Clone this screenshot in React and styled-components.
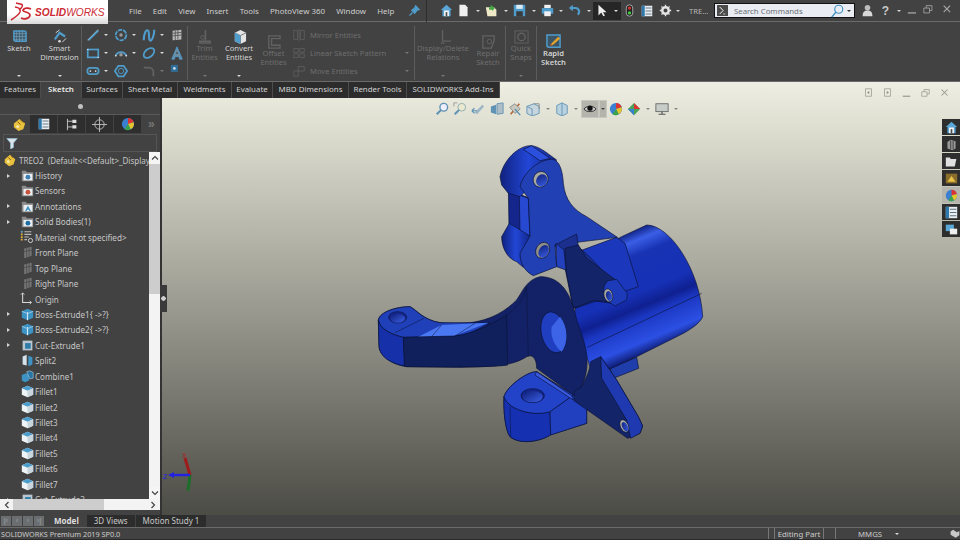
import React from "react";
import styled, { createGlobalStyle } from "styled-components";

const GlobalStyle = createGlobalStyle`
  html, body { margin: 0; padding: 0; background: #424242; overflow: hidden; }
  #root { width: 960px; height: 540px; }
  * { box-sizing: border-box; }
`;

const BLUE = "#4f9ccb";
const OFF = "#626262";

const Svg = ({ s = 16, children, ...rest }) => (
  <svg width={s} height={s} viewBox="0 0 16 16" fill="none" style={{ flex: "none", display: "block" }} {...rest}>
    {children}
  </svg>
);

/* sketch tool drawings */
const Line = () => <Svg><path d="M2 14L14 2" stroke="#e8f0f6" strokeWidth="1.2" /><path d="M3 14L14 3" stroke={BLUE} strokeWidth="2" /></Svg>;
const Rect = () => <Svg><rect x="2" y="4" width="12" height="9" stroke={BLUE} strokeWidth="2" /><path d="M1 4h2M13 13h2" stroke="#ddd" /></Svg>;
const Slot = () => <Svg><rect x="1.5" y="4.5" width="13" height="7" rx="3.5" stroke={BLUE} strokeWidth="2" /><circle cx="5" cy="8" r="1" fill="#ddd" /><circle cx="11" cy="8" r="1" fill="#ddd" /></Svg>;
const Ring = () => <Svg><circle cx="8" cy="8" r="6" stroke={BLUE} strokeWidth="2" strokeDasharray="5 1" /><circle cx="8" cy="8" r="2" fill="#999" /></Svg>;
const ArcTool = () => <Svg><path d="M2 11a6.5 6.5 0 0 1 12 0" stroke={BLUE} strokeWidth="2" /><circle cx="8" cy="10" r="2" fill="#999" /><circle cx="2" cy="11" r="1" fill="#ddd" /><circle cx="14" cy="11" r="1" fill="#ddd" /></Svg>;
const Hex = () => <Svg><path d="M5 2h6l4 6-4 6H5L1 8z" stroke={BLUE} strokeWidth="2" /><circle cx="8" cy="8" r="3" stroke={BLUE} /></Svg>;
const Spline = () => <Svg><path d="M2 14C2 6 5 1 7 3s0 9 2 11 5-5 5-12" stroke={BLUE} strokeWidth="2.4" /></Svg>;
const Ellipse = () => <Svg><ellipse cx="8" cy="8" rx="7" ry="4.5" transform="rotate(-40 8 8)" stroke={BLUE} strokeWidth="2" /></Svg>;
const Fillet = () => <Svg><path d="M2 4h6a5 5 0 0 1 5 5v5" stroke={OFF} strokeWidth="2" /></Svg>;
const PlaneGrid = () => <Svg><path d="M3 3l10-1v11l-10 1z" fill="#bbb" /><path d="M6 3v11M9 2v11M3 6l10-1M3 9l10-1" stroke="#555" /></Svg>;
const TextA = () => <Svg><path d="M8 1L2 15h3l1-3h4l1 3h3z" fill="#6d8ea3" stroke={BLUE} /><path d="M7 9l1-3 1 3z" fill="#444" /></Svg>;
const Dot = () => <Svg s={10}><rect x="1" y="1" width="8" height="8" fill="#2f6e98" /><circle cx="5" cy="5" r="1.5" fill="#cde" /></Svg>;

const SketchIcon = () => <Svg s={15}><path d="M2 2h11a2 2 0 0 1 2 2v9H4a2 2 0 0 1-2-2z" stroke={BLUE} strokeWidth="1.6" fill="#3f5a6c" /><path d="M5 2v11M8 2v11M11 2v11M2 5h13M2 8h13M2 11h13" stroke="#7da9c4" strokeWidth=".6" /></Svg>;
const SmartIcon = () => <Svg s={15}><path d="M3 11L8 4l6 4" stroke={BLUE} strokeWidth="2.4" /><path d="M4 4l4-3M11 14l4-4" stroke="#ddd" /><circle cx="8" cy="13" r="1.4" fill="#ddd" /></Svg>;
const TrimIcon = () => <Svg s={15}><path d="M9 1v11M3 13h11v2H3z" stroke={OFF} strokeWidth="1.6" /><circle cx="6" cy="9" r="2" stroke={OFF} /></Svg>;
const ConvertIcon = () => <Svg s={15}><path d="M9 1l6 3v9l-6 3-6-3V4z" fill="#e4e4e4" /><path d="M3 4l6 3 6-3M9 7v9" stroke="#777" /><path d="M3 4v9l6 3V7z" fill="#4f9ccb" /></Svg>;
const OffsetIcon = () => <Svg s={15}><path d="M3 2h12v3H6v7h9v3H3z" stroke={OFF} strokeWidth="1.4" /></Svg>;
const MirrorIcon = () => <Svg s={12}><path d="M1 2h5v12H1zM10 2h5v12h-5zM8 0v16" stroke={OFF} /></Svg>;
const PatternIcon = () => <Svg s={12}><path d="M1 2h6v5H1zM9 2h6v5H9zM1 9h6v5H1zM9 9h6v5H9z" stroke={OFF} /></Svg>;
const MoveIcon = () => <Svg s={12}><path d="M7 2h8v6H7zM1 8h6v7H1z" stroke={OFF} /></Svg>;
const RelationIcon = () => <Svg s={15}><path d="M7 1v12h9M5 15h4" stroke={OFF} strokeWidth="1.4" /></Svg>;
const RepairIcon = () => <Svg s={15}><path d="M2 2h12v5l-3 8H2z" stroke={OFF} strokeWidth="1.4" /><circle cx="9" cy="8" r="2.4" stroke={OFF} /></Svg>;
const SnapsIcon = () => <Svg s={15}><rect x="1" y="2" width="14" height="13" stroke={OFF} /><circle cx="8" cy="8.5" r="4" stroke={OFF} strokeWidth="1.4" /></Svg>;
const RapidIcon = () => <Svg s={15}><path d="M1 1h14v13H3a2 2 0 0 1-2-2z" stroke={BLUE} strokeWidth="1.6" fill="#3e5566" /><path d="M5 11L13 3l2 2-8 7z" fill="#e3a32a" /><path d="M5 11l-1 2 3-1z" fill="#d9562b" /></Svg>;

/* title bar */
const House = ({ s = 16 }) => <Svg s={s}><path d="M8 1L1 7.5h2V15h10V7.5h2z" fill="#5aa6d6" /><path d="M5 8h6v7H5z" fill="#f2f2f2" /><path d="M7 10h2v5H7z" fill="#4a4a4a" /></Svg>;
const Doc = () => <Svg><path d="M3 1h7l3 3v11H3z" fill="#f0f0f0" /></Svg>;
const OpenDoc = () => <Svg><path d="M1 4h10l3 3v8H3z" fill="#efe9c8" /><path d="M7 1l5 4-3 4V7H5V4h2z" fill="#44a644" /></Svg>;
const Floppy = () => <Svg><path d="M1 1h14v14H1z" fill="#4f9ccb" /><path d="M4 1h8v5H4z" fill="#dceaf3" /><path d="M4 9h8v6H4z" fill="#3a3a3a" /></Svg>;
const Printer = () => <Svg><path d="M4 1h8v4H4z" fill="#f0f0f0" /><path d="M1 5h14v7H1z" fill="#4f9ccb" /><path d="M4 9h8v6H4z" fill="#f0f0f0" /></Svg>;
const Undo = () => <Svg><path d="M3 5h6a4.5 4.5 0 0 1 3 8" stroke="#4f9ccb" strokeWidth="2.6" /><path d="M6 1v8L1 5z" fill="#4f9ccb" /></Svg>;
const Cursor = () => <Svg><path d="M3 1v13l3.5-3.5L9 15l2-1-2.4-4H13z" fill="#eee" /></Svg>;
const Lights = () => <Svg><rect x="4" y="1" width="8" height="14" rx="4" fill="#222" stroke="#bbb" /><circle cx="8" cy="5" r="2" fill="#d33" /><circle cx="8" cy="11" r="2" fill="#4c4" /></Svg>;
const ListPane = ({ s = 16 }) => <Svg s={s}><path d="M1 1h14v14H1z" fill="#e8eef2" /><path d="M1 1h4v14H1z" fill="#2d78ad" /><path d="M6 4h8M6 8h8M6 12h8" stroke="#456" /></Svg>;
const Gear = () => <Svg><circle cx="8" cy="8" r="4" stroke="#e6e6e6" strokeWidth="3" /><path d="M8 1v14M1 8h14M3 3l10 10M13 3L3 13" stroke="#e6e6e6" strokeWidth="1.6" strokeDasharray="2 10" /></Svg>;
const Pin = () => <Svg><path d="M10 1l5 5-3 1-3 4-4-4 4-3zM6 10l-4 4" stroke="#4f9ccb" strokeWidth="1.6" fill="#4f9ccb" /></Svg>;
const Prompt = () => <Svg s={11}><rect width="16" height="16" fill="#4b4b4b" /><path d="M4 3l5 5-5 5" stroke="#fff" strokeWidth="1.4" /><path d="M9 13h3" stroke="#fff" /></Svg>;
const Lens = () => <Svg s={14}><circle cx="10" cy="6" r="4.6" stroke="#3d8fc4" strokeWidth="1.3" /><path d="M7 9l-5 6" stroke="#3d8fc4" strokeWidth="1.6" /></Svg>;
const User = () => <Svg><circle cx="8" cy="4.5" r="3.4" fill="#bdbdbd" /><path d="M2 15c0-5 2-7 6-7s6 2 6 7z" fill="#d8d8d8" /></Svg>;
const WinMin = ({ c }) => <Svg s={12}><path d="M1 11h10" stroke={c} strokeWidth="1.6" /></Svg>;
const WinMax = ({ c }) => <Svg s={12}><path d="M1 5h7v6H1zM4 5V2h7v6H8" stroke={c} /></Svg>;
const WinClose = ({ c }) => <Svg s={12}><path d="M2 2l8 8M10 2l-8 8" stroke={c} strokeWidth="1.4" /></Svg>;
const PaneArrow = ({ flip }) => <Svg s={12}><path d="M2 1h8v10H2z" stroke="#9a9a90" /><path d={flip ? "M5 4l3 2-3 2z" : "M7 4L4 6l3 2z"} fill="#8a8a80" /></Svg>;

/* heads-up view toolbar */
const H_BLUE = "#5f92b4";
const HudZoom = () => <Svg><circle cx="10" cy="6" r="4.4" stroke={H_BLUE} strokeWidth="1.6" fill="#eef" /><path d="M7 9l-5 5" stroke={H_BLUE} strokeWidth="2.4" /></Svg>;
const HudArea = () => <Svg><circle cx="10" cy="6" r="4.4" fill="#e9e9d2" stroke="#8aa" /><path d="M7 9l-5 5" stroke={H_BLUE} strokeWidth="2.4" /><path d="M1 1h4M1 1v4" stroke="#999" /></Svg>;
const HudPrev = () => <Svg><path d="M4 12L13 3l2 2-8 9z" fill="#9eb7c7" /><path d="M1 10h6M1 10l3-3M1 10l3 3" stroke={H_BLUE} strokeWidth="1.4" /></Svg>;
const HudSection = () => <Svg><path d="M1 5l6-2v11l-6-2z" fill="#5f92b4" /><path d="M8 2l7-1v12l-7 1z" fill="#aebdc7" stroke="#5f92b4" /></Svg>;
const HudDyn = () => <Svg><path d="M3 14L13 2" stroke="#b7693c" strokeWidth="2" /><path d="M2 6l6-4 6 6-6 5z" fill="#c9c9c0" stroke="#888" /><path d="M8 8l6 7" stroke={H_BLUE} strokeWidth="1.6" /></Svg>;
const HudOrient = () => <Svg><path d="M1 5l8-3 6 3v8l-8 3-6-3z" fill="#c7d5df" stroke="#5f92b4" /><path d="M1 5l6 3v8" stroke="#5f92b4" /><path d="M9 2h6v6" stroke="#888" /></Svg>;
const HudStyle = () => <Svg><path d="M2 4l6-3 6 3v9l-6 3-6-3z" fill="#b9d2e0" stroke="#5f92b4" /><path d="M8 1v15" stroke="#5f92b4" /></Svg>;
const Eye = () => <Svg><path d="M1 8c3-4 11-4 14 0-3 4-11 4-14 0z" fill="#ccc" stroke="#222" /><circle cx="8" cy="7" r="3" fill="#111" /></Svg>;
const Wheel = ({ s = 16 }) => <Svg s={s}><circle cx="8" cy="8" r="7" fill="#3b7fd0" /><path d="M8 8V1a7 7 0 0 1 6.5 5z" fill="#d33" /><path d="M8 8l6.5-2A7 7 0 0 1 11 14z" fill="#e6c52a" /><path d="M8 8l3 6a7 7 0 0 1-7 0z" fill="#3aa34a" /></Svg>;
const Scene = () => <Svg><path d="M8 1l7 7-7 7-7-7z" fill="#4aa457" /><path d="M8 1l7 7H8z" fill="#d33" /><path d="M1 8h7v7z" fill="#3b7fd0" /></Svg>;
const Monitor = () => <Svg><rect x="1" y="2" width="14" height="9" fill="#c7ccc8" stroke="#666" /><path d="M8 11v3M4 14h8" stroke="#555" strokeWidth="1.4" /></Svg>;

/* feature tree */
const Part = ({ s = 14 }) => <Svg s={s}><path d="M2 7l6-5 6 5-2 6-5 2-5-4z" fill="#e9bf3e" /><path d="M6 5l3 3M9 3l3 3" stroke="#7a5a10" /><circle cx="6" cy="10" r="1.6" fill="#f7e9a8" /></Svg>;
const Folder = ({ c, glyph }) => <Svg s={13}><path d="M1 2h5l1 2h8v11H1z" fill="#8a8a8a" /><path d="M3 6h11v8H3z" fill="#e8eef2" />{glyph ? <path d="M8.5 7L5 13.5h2l.6-1.4h2l.6 1.4h2z" fill={c} /> : <circle cx="8.5" cy="10" r="3" fill={c} />}</Svg>;
const MaterialIcon = () => <Svg s={14}><path d="M1 2h2M5 2h8M5 5h8M5 8h5M5 11h3" stroke="#bbb" strokeWidth="1.2" /><path d="M1 2h2" stroke="#4f9ccb" strokeWidth="2" /><path d="M1 5h2M1 8h2M1 11h2" stroke="#e6b53a" strokeWidth="2" /><circle cx="12" cy="12" r="2.4" stroke="#ddd" /></Svg>;
const Plane = () => <Svg s={13}><path d="M4 3l9-2v11l-9 3z" fill="#777" /><path d="M7 2.5V14M10 2v11M4 7l9-2" stroke="#4a4a4a" /></Svg>;
const OriginIcon = () => <Svg s={14}><path d="M3 1v11h10" stroke="#d8d8d8" strokeWidth="1.2" /><path d="M1 3l2-2 2 2M11 10l2 2-2 2" stroke="#d8d8d8" /></Svg>;
const Boss = () => <Svg s={13}><path d="M1 4l7-3 7 3v8l-7 3-7-3z" fill="#3d93c4" /><path d="M8 5v10" stroke="#d7e8f2" strokeWidth="1.4" /><path d="M1 4l7 3 7-3" stroke="#a9d2e8" /></Svg>;
const Cut = () => <Svg s={13}><path d="M2 2h12v12H2z" fill="#b9c6cf" /><path d="M5 5h7v7H5z" fill="#2f7cab" /></Svg>;
const Split = () => <Svg s={13}><path d="M2 3l5-2v13l-5-1z" fill="#d5e2ea" /><path d="M9 2l5 2v9l-5 2z" fill="#3d93c4" /></Svg>;
const Combine = () => <Svg s={13}><path d="M1 6l5-2 4 2v7l-5 2-4-2z" fill="#3d93c4" /><path d="M7 2l4-1 4 2v7l-4 1z" fill="#2774a5" stroke="#cfe3ee" strokeWidth=".6" /></Svg>;
const FilletCube = () => <Svg s={13}><path d="M1 4l7-3 7 3v8l-7 3-7-3z" fill="#eef3f6" /><path d="M1 4l7 3 7-3-7-3z" fill="#4a9ccb" /><path d="M8 7v8l7-3V4z" fill="#c8d5dc" /></Svg>;
const ScrollMark = ({ d }) => <Svg s={8}><path d={d} stroke="#444" strokeWidth="2.4" /></Svg>;

const TREE = [
  { label: "History", arrow: true, icon: <Folder c="#3d7fb5" /> },
  { label: "Sensors", icon: <Folder c="#c8543c" /> },
  { label: "Annotations", arrow: true, icon: <Folder c="#3d93c4" glyph /> },
  { label: "Solid Bodies(1)", arrow: true, icon: <Folder c="#1f6ea3" /> },
  { label: "Material <not specified>", icon: <MaterialIcon /> },
  { label: "Front Plane", icon: <Plane /> },
  { label: "Top Plane", icon: <Plane /> },
  { label: "Right Plane", icon: <Plane /> },
  { label: "Origin", icon: <OriginIcon /> },
  { label: "Boss-Extrude1{ ->?}", arrow: true, icon: <Boss /> },
  { label: "Boss-Extrude2{ ->?}", arrow: true, icon: <Boss /> },
  { label: "Cut-Extrude1", arrow: true, icon: <Cut /> },
  { label: "Split2", icon: <Split /> },
  { label: "Combine1", icon: <Combine /> },
  { label: "Fillet1", icon: <FilletCube /> },
  { label: "Fillet2", icon: <FilletCube /> },
  { label: "Fillet3", icon: <FilletCube /> },
  { label: "Fillet4", icon: <FilletCube /> },
  { label: "Fillet5", icon: <FilletCube /> },
  { label: "Fillet6", icon: <FilletCube /> },
  { label: "Fillet7", icon: <FilletCube /> },
  { label: "Cut-Extrude3", arrow: true, icon: <Cut /> },
];

const RIBBON_TABS = [
  ["Features", 41], ["Sketch", 41], ["Surfaces", 41], ["Sheet Metal", 55], ["Weldments", 54],
  ["Evaluate", 41], ["MBD Dimensions", 76], ["Render Tools", 58], ["SOLIDWORKS Add-Ins", 93],
];

const Page = styled.div`
  width: 960px;
  height: 540px;
  display: flex;
  flex-direction: column;
  background: #424242;
  color: #d0d0d0;
  font-family: "Noto Sans", "Open Sans", sans-serif;
  font-size: 8px;
  overflow: hidden;
`;

const TitleBar = styled.header`
  height: 22px;
  flex: none;
  display: flex;
  align-items: center;
  border-bottom: 1px solid #6b6b6b;
  position: relative;
  z-index: 3;
`;

const Logo = styled.div`
  width: 101px;
  height: 24px;
  margin: 0 0 0 7px;
  align-self: flex-start;
  flex: none;
  background: linear-gradient(#ffffff 60%, #d8d8d8);
  display: flex;
  align-items: center;
  gap: 3px;
  padding-left: 3px;
  color: #cc2a32;
  font-family: "Liberation Sans", sans-serif;
  font-size: 10.2px;
  b { font-weight: 700; font-style: italic; }
  span { font-style: italic; letter-spacing: 0; }
`;

const Menu = styled.nav`
  display: flex;
  margin-left: 21px;
  width: 279px;
  gap: 11.2px;
  flex: none;
  color: #cfcfcf;
  font-size: 7.9px;
`;

const PinSlot = styled.div`
  width: 19px;
  height: 22px;
  display: flex;
  align-items: center;
  flex: none;
  border-right: 1px solid #2e2e2e;
  svg { width: 12px; height: 12px; }
`;

const QuickBar = styled.div`
  display: flex;
  align-items: center;
  margin-left: 11px;
  flex: none;
`;

const Quick = styled.div`
  width: ${(p) => p.$w || 14}px;
  height: 22px;
  display: flex;
  align-items: center;
  justify-content: center;
  flex: none;
  svg { width: ${(p) => p.$s || 13}px; height: ${(p) => p.$s || 13}px; }
`;

const Drop = styled.i`
  width: 0;
  height: 0;
  flex: none;
  border: 2px solid transparent;
  border-top: 2.5px solid ${(p) => p.$c || "#d8d8d8"};
  border-bottom: 0;
  display: block;
`;

const DropSlot = styled.div`
  width: ${(p) => p.$w || 14}px;
  display: flex;
  justify-content: center;
  flex: none;
`;

const SelectBox = styled.div`
  width: 28px;
  height: 18px;
  background: #262626;
  display: flex;
  align-items: center;
  gap: 5px;
  padding-left: 3px;
  flex: none;
  margin-left: -1px;
  svg { width: 13px; height: 13px; }
`;

const DocName = styled.span`
  color: #b5b5b5;
  font-size: 7.6px;
  margin-left: 8px;
  width: 25px;
  flex: none;
`;

const Search = styled.div`
  width: 141px;
  height: 15px;
  background: #e9ecf2;
  border: 1px solid #111;
  display: flex;
  align-items: center;
  color: #6b6f76;
  gap: 3px;
  padding: 0 3px 0 2px;
  flex: none;
  font-size: 7.8px;
  span { flex: 1; margin-left: 3px; }
`;

const Help = styled.span`
  color: #c8c8c8;
  font: 700 12px "Liberation Sans", sans-serif;
`;

const RibbonBar = styled.section`
  height: 60px;
  flex: none;
  display: flex;
  padding-top: 4px;
  border-bottom: 1px solid #6a6a6a;
`;

const Tool = styled.div`
  width: ${(p) => p.$w}px;
  height: 55px;
  flex: none;
  display: flex;
  flex-direction: column;
  align-items: center;
  text-align: center;
  line-height: 9px;
  font-size: 7.6px;
  padding-top: ${(p) => p.$top || 3}px;
  color: ${(p) => (p.$off ? "#6e6e6e" : "#d4d4d4")};
  font-weight: ${(p) => (p.$strong ? 600 : 400)};
`;

const ToolDrop = styled.div`
  margin-top: auto;
  margin-bottom: 3px;
  height: 3px;
`;

const Sep = styled.div`
  width: 1px;
  height: 54px;
  flex: none;
  background: #5c5c5c;
`;

const SmallGrid = styled.div`
  width: 105px;
  flex: none;
  display: grid;
  grid-template-columns: 28px 28px 28px 21px;
  grid-auto-rows: 18px;
  padding: 0 0 0 2px;
`;

const SmallTool = styled.div`
  display: flex;
  align-items: center;
  gap: 4px;
  padding-left: 2px;
  svg { width: 14px; height: 14px; }
`;

const ListTools = styled.div`
  width: 124px;
  flex: none;
  display: flex;
  flex-direction: column;
`;

const ListTool = styled.div`
  height: 18px;
  display: flex;
  align-items: center;
  gap: 5px;
  padding: 0 5px 0 3px;
  color: #6e6e6e;
  font-size: 7.6px;
  span { flex: 1; }
`;

const Workspace = styled.main`
  flex: 1;
  display: flex;
  position: relative;
  min-height: 0;
`;

const TabStrip = styled.div`
  position: absolute;
  left: 0;
  top: 0;
  height: 16px;
  display: flex;
  z-index: 2;
  background: #2c2c2c;
`;

const RibbonTab = styled.div`
  width: ${(p) => p.$w}px;
  height: 16px;
  text-align: center;
  line-height: 15px;
  font-size: 7.9px;
  white-space: nowrap;
  border-right: 1px solid #4d4d4d;
  color: ${(p) => (p.$on ? "#ededed" : "#d2d2d2")};
  font-weight: ${(p) => (p.$on ? 600 : 400)};
  background: ${(p) => (p.$on ? "#424242" : "#2c2c2c")};
`;

const LeftPanel = styled.aside`
  width: 160px;
  flex: none;
  padding-top: 16px;
  display: flex;
  flex-direction: column;
  background: #424242;
  min-height: 0;
`;

const Grip = styled.div`
  height: 17px;
  flex: none;
  display: flex;
  align-items: center;
  justify-content: center;
  border-bottom: 1px solid #5a5a5a;
  &::before {
    content: "";
    width: 5px;
    height: 5px;
    border-radius: 50%;
    background: #c0c0c0;
  }
`;

const PaneTabs = styled.div`
  height: 18px;
  flex: none;
  display: flex;
  padding-left: 10px;
  gap: 1px;
`;

const PaneTab = styled.div`
  width: ${(p) => (p.$on ? 19 : 27)}px;
  height: 18px;
  flex: none;
  display: flex;
  align-items: center;
  justify-content: center;
  background: ${(p) => (p.$on ? "#424242" : "#2e2e2e")};
`;

const Chevron = styled.span`
  margin-left: 6px;
  color: #777;
  font: 700 12px/18px "Liberation Sans", sans-serif;
`;

const FilterRow = styled.div`
  height: 18px;
  margin: 1px 3px 0.4px 3px;
  flex: none;
  border: 1px solid #555;
  display: flex;
  align-items: center;
  padding-left: 2px;
`;

const TreeArea = styled.div`
  flex: 1;
  min-height: 0;
  display: flex;
  overflow: hidden;
`;

const Tree = styled.div`
  flex: 1;
  min-width: 0;
  overflow: hidden;
  white-space: nowrap;
`;

const Row = styled.div`
  height: 15.45px;
  display: flex;
  align-items: center;
  color: #c6c6c6;
  font-size: 8.1px;
`;

const Caret = styled.div`
  width: 19px;
  flex: none;
  padding-left: 7px;
  &::before {
    content: "";
    display: ${(p) => (p.$show ? "block" : "none")};
    width: 0;
    height: 0;
    border: 2.5px solid transparent;
    border-left: 3.5px solid #d4d4d4;
    border-right: 0;
  }
`;

const RowIcon = styled.div`
  width: 16px;
  display: flex;
  justify-content: center;
  flex: none;
`;

const RootRow = styled(Row)`
  padding-left: 3px;
  gap: 2px;
  font-size: 8px;
  overflow: hidden;
`;

const VScroll = styled.div`
  width: 11px;
  flex: none;
  background: #f3f3f3;
  display: flex;
  flex-direction: column;
`;

const ScrollEnd = styled.div`
  height: 12px;
  flex: none;
  background: #f5f5f5;
  display: flex;
  align-items: center;
  justify-content: center;
`;

const VThumb = styled.div`
  height: 130px;
  flex: none;
  background: #cdcdcd;
`;

const VSpace = styled.div`
  flex: 1;
`;

const HScroll = styled.div`
  height: 11px;
  flex: none;
  display: flex;
  align-items: center;
  background: #f3f3f3;
`;

const HArrow = styled.div`
  width: 13px;
  display: flex;
  justify-content: center;
  flex: none;
`;

const HThumb = styled.div`
  width: 91px;
  height: 11px;
  background: #cdcdcd;
  flex: none;
  margin-right: 42px;
`;

const PanelFoot = styled.div`
  height: 5px;
  flex: none;
`;

const Splitter = styled.div`
  width: 2px;
  flex: none;
  background: #333;
  position: relative;
  z-index: 1;
  &::after {
    content: "";
    position: absolute;
    left: 0;
    top: 203px;
    width: 7px;
    height: 27px;
    background: #3a3a3a radial-gradient(circle at 50% 50%, #cfcfcf 0 2px, transparent 2.5px);
  }
`;

const Viewport = styled.div`
  flex: 1;
  position: relative;
  background: linear-gradient(#eeeee2 0%, #dbdbce 12%, #4c4c46 100%);
`;

const HudBar = styled.div`
  position: absolute;
  left: 271px;
  top: 18px;
  display: flex;
  align-items: center;
  height: 18px;
`;

const Hud = styled.div`
  width: ${(p) => p.$w || 18.2}px;
  height: 18px;
  flex: none;
  display: flex;
  align-items: center;
  justify-content: center;
  background: ${(p) => (p.$on ? "#b4b4ac" : "transparent")};
  border: ${(p) => (p.$on ? "1px solid #c8c8c0" : "0")};
  svg { width: 14px; height: 14px; }
`;

const DocControls = styled.div`
  position: absolute;
  right: 8px;
  top: 6px;
  display: flex;
  gap: 7px;
`;

const TaskPane = styled.div`
  position: absolute;
  right: 0;
  top: 37px;
  width: 18px;
  display: flex;
  flex-direction: column;
  gap: 1px;
`;

const TaskBtn = styled.div`
  height: 16px;
  display: flex;
  align-items: center;
  justify-content: center;
  background: ${(p) => (p.$on ? "#b5b5ad" : "#2e2e2e")};
  svg { width: 13px; height: 13px; }
`;

const PartView = styled.svg`
  position: absolute;
  left: 198px;
  top: 48px;
  width: 350px;
  height: 320px;
`;

const Triad = styled.svg`
  position: absolute;
  left: 0;
  bottom: 20px;
  width: 34px;
  height: 44px;
`;

const ModelTabs = styled.div`
  height: 12px;
  flex: none;
  display: flex;
  border-top: 1px solid #6a6a6a;
  border-bottom: 1px solid #6a6a6a;
  box-sizing: content-box;
  margin-top: -1px;
`;

const NavArrows = styled.div`
  width: 47px;
  flex: none;
  display: flex;
  align-items: center;
  gap: 1px;
  padding-left: 1px;
`;

const NavArrow = styled.div`
  width: 10px;
  height: 10px;
  background: #6a6e70;
  color: #8f9496;
  font: 700 7px/10px "Liberation Sans", sans-serif;
  text-align: center;
`;

const ModelTab = styled.div`
  height: 12px;
  line-height: 11px;
  padding: 0 7px;
  margin-right: 1px;
  font-size: 8px;
  font-weight: ${(p) => (p.$on ? 700 : 400)};
  background: ${(p) => (p.$on ? "#424242" : "#2c2c2c")};
  color: ${(p) => (p.$on ? "#dedede" : "#c8c8c8")};
`;

const StatusBar = styled.footer`
  height: 12px;
  flex: none;
  display: flex;
  align-items: center;
  padding-left: 1px;
  font-size: 7.8px;
  color: #cacaca;
  border-bottom: 1px solid #2a2a2a;
`;

const StatusText = styled.span`
  flex: 1;
  font-size: 7.3px;
`;

const StatusCell = styled.div`
  width: ${(p) => p.$w}px;
  height: 11px;
  flex: none;
  display: flex;
  align-items: center;
  justify-content: ${(p) => p.$justify || "center"};
  gap: 13px;
  padding-left: ${(p) => p.$pad || 0}px;
  border-left: 1px solid #777;
`;

const Spacer = styled.div`
  flex: 1;
  min-width: 0;
`;

const WIN = "#a8a8a8";

function BigTool({ w, label, icon, off, strong, top, drop }) {
  return (
    <Tool $w={w} $off={off} $strong={strong} $top={top}>
      {icon}
      {label.map((t) => <span key={t}>{t}</span>)}
      {drop && <ToolDrop><Drop $c={off ? "#777" : "#d8d8d8"} /></ToolDrop>}
    </Tool>
  );
}

function KnucklePart() {
  const edge = { stroke: "#0a1238", strokeWidth: 2, strokeLinejoin: "round" };
  return (
    <PartView viewBox="0 0 1050 960">
      <defs>
        <linearGradient id="barrel" gradientUnits="userSpaceOnUse" x1="830" y1="300" x2="965" y2="625">
          <stop offset="0" stopColor="#14288e" />
          <stop offset="0.08" stopColor="#3a5ee6" />
          <stop offset="0.2" stopColor="#1833b4" />
          <stop offset="0.5" stopColor="#1630b6" />
          <stop offset="0.62" stopColor="#0f2090" />
          <stop offset="0.7" stopColor="#1a36c0" />
          <stop offset="0.9" stopColor="#2c50e4" />
          <stop offset="1" stopColor="#0f1f78" />
        </linearGradient>
        <linearGradient id="lug" x1="0" y1="0" x2="1" y2="0">
          <stop offset="0" stopColor="#10227e" />
          <stop offset="0.5" stopColor="#2246d6" />
          <stop offset="1" stopColor="#12268c" />
        </linearGradient>
        <linearGradient id="hole" x1="0" y1="0" x2="1" y2="1">
          <stop offset="0" stopColor="#0f1f78" />
          <stop offset="1" stopColor="#3a5fe6" />
        </linearGradient>
      </defs>

      {/* rear tab and barrel */}
      <path d="M750 715L830 682L836 715L760 745Z" fill="#1f3eab" {...edge} />
      <path d="M690 370L785 320L860 285C930 285 1020 420 1028 560C1020 580 990 600 960 615L830 680L700 740L640 560Z" fill="url(#barrel)" {...edge} />
      <path d="M682 652L1025 490" stroke="#0a1238" strokeWidth="1.8" />
      <path d="M640 370L770 322L795 340L835 470L645 535Z" fill="#1b38bc" {...edge} />

      {/* upper bracket */}
      <path d="M445 180L510 205L510 320L447 290Z" fill="#14268c" {...edge} />
      <path d="M478 195L505 205L510 318L480 312Z" fill="#2748d0" {...edge} />
      <path d="M420 140C430 90 475 45 515 47C540 50 565 72 590 90L480 200L445 190L425 165Z" fill="url(#lug)" {...edge} />
      <path d="M490 58L515 47L570 85L540 92Z" fill="#2c50de" {...edge} />
      <path d="M425 320L448 280L510 318L490 412L470 395C440 385 425 350 425 320Z" fill="url(#lug)" {...edge} />
      <path d="M480 170C490 125 540 85 580 88C600 95 608 125 610 160C615 210 640 240 680 260L772 322L585 345L590 410L520 437C495 425 480 400 480 370L510 318L505 205Z" fill="#2040b4" {...edge} />
      <ellipse cx="542" cy="148" rx="22" ry="24" transform="rotate(30 542 148)" fill="#a9aaa0" {...edge} />
      <ellipse cx="545" cy="151" rx="16" ry="19" transform="rotate(30 545 151)" fill="url(#hole)" />
      <ellipse cx="548" cy="361" rx="20" ry="25" transform="rotate(30 548 361)" fill="#8f8f88" {...edge} />
      <ellipse cx="551" cy="364" rx="14" ry="20" transform="rotate(30 551 364)" fill="url(#hole)" />

      {/* small gusset */}
      <path d="M585 345L650 312L655 350L688 380L755 450L800 490L770 522L700 512L640 535L615 415Z" fill="#1b2f8f" {...edge} />
      <path d="M615 355L655 345L680 385L700 400L770 452L745 515L700 512L640 535L618 420Z" fill="#132468" {...edge} />
      <path d="M745 452L770 448L802 490L800 510L765 528L745 515C725 505 725 465 745 452Z" fill="#1d3bb8" {...edge} />
      <ellipse cx="745" cy="496" rx="13" ry="20" transform="rotate(-15 745 496)" fill="#a9aaa0" {...edge} />
      <ellipse cx="747" cy="498" rx="9" ry="15" transform="rotate(-15 747 498)" fill="url(#hole)" />
      <path d="M588 340L612 360L618 420L590 410Z" fill="#2341bc" {...edge} />

      {/* arm and round flange */}
      <path d="M55 570C60 545 110 530 150 530C170 540 190 570 240 578C320 585 400 580 470 510C490 480 500 450 540 440C590 440 630 470 650 570C670 630 700 690 665 770L640 795L530 715C530 690 520 670 500 680C460 705 420 710 300 712L140 710C100 705 60 680 57 650Z" fill="#132266" {...edge} />
      <path d="M55 570C60 545 110 530 150 530C170 540 190 570 240 578L390 578C350 600 320 618 280 618L130 622C100 615 60 600 55 570Z" fill="#1f40b8" {...edge} />
      <path d="M172 622L245 585L385 578L282 618Z" fill="#4a78f2" />
      <path d="M245 585L215 620M345 580L285 618M105 608L192 565" stroke="#0a1238" strokeWidth="1.5" />
      <path d="M55 570C60 600 100 615 130 622L135 708C90 700 60 680 57 650Z" fill="#1530a8" {...edge} />
      <path d="M130 622L282 618C340 612 390 585 440 555L443 705C420 710 300 712 140 710L133 708Z" fill="#10205c" {...edge} />
      <ellipse cx="113" cy="562" rx="27" ry="17" fill="#14268c" {...edge} />
      <ellipse cx="113" cy="565" rx="22" ry="13" fill="url(#hole)" />
      <path d="M440 555C470 535 490 510 500 470L505 680" stroke="#0a1238" strokeWidth="1.5" fill="none" />
      <ellipse cx="581" cy="607" rx="37" ry="62" transform="rotate(-12 581 607)" fill="#1f3fc0" {...edge} />
      <path d="M600 560C625 590 625 640 605 665C585 650 570 620 575 590Z" fill="#3d63e6" />

      {/* bottom mount */}
      <path d="M432 800C440 770 500 725 530 725L640 795L680 835V880L570 915C540 935 480 945 450 920C435 900 430 840 432 800Z" fill="#1f40b8" {...edge} />
      <path d="M432 800C445 840 520 860 570 845L572 915C540 935 480 945 450 920C435 900 430 840 432 800Z" fill="#1530b0" {...edge} />
      <path d="M570 845L640 795L680 835V880L572 915Z" fill="#2040c0" {...edge} />
      <path d="M450 830L452 920" stroke="#0a1238" strokeWidth="1.5" />
      <path d="M432 800C440 770 500 725 530 725L640 795L570 845C520 860 445 840 432 800Z" fill="#2242c8" {...edge} />
      <path d="M530 725L635 797L640 810L525 735Z" fill="#3a5be0" {...edge} />
      <ellipse cx="518" cy="797" rx="35" ry="21" fill="#14268c" {...edge} />
      <ellipse cx="518" cy="800" rx="30" ry="17" fill="url(#hole)" />

      {/* web fin */}
      <path d="M692 695L722 680L770 750L835 860L848 888L840 910L803 925L642 812L642 785L665 770C680 740 690 720 692 695Z" fill="#132468" {...edge} />
      <path d="M722 680L770 750L835 860L848 888L840 910L812 925L800 870L725 745Z" fill="#1f3ab0" {...edge} />
      <ellipse cx="793" cy="888" rx="12" ry="20" transform="rotate(-25 793 888)" fill="#a9aaa0" {...edge} />
      <ellipse cx="795" cy="890" rx="8" ry="15" transform="rotate(-25 795 890)" fill="url(#hole)" />
    </PartView>
  );
}

export default function App() {
  return (
    <Page>
      <GlobalStyle />
      <TitleBar>
        <Logo>
          <svg width="22" height="21" viewBox="0 0 22 21" fill="none" style={{ flex: "none" }}>
            <path d="M6 1l6 1.5c1 1.5-1 4-3 5.5M5 5c4 .5 6 2 5 5-1.5 3-5 5.5-9 8" stroke="#cc2a32" strokeWidth="1.5" />
            <path d="M21 7c-3-1.5-7-1-8 1s7 2 7 5-5 5-9 3" stroke="#cc2a32" strokeWidth="1.7" />
          </svg>
          <span><b>SOLID</b>WORKS</span>
        </Logo>
        <Menu>
          {["File", "Edit", "View", "Insert", "Tools", "PhotoView 360", "Window", "Help"].map((m) => <span key={m}>{m}</span>)}
        </Menu>
        <PinSlot><Pin /></PinSlot>
        <QuickBar>
          <Quick $w={16}><House /></Quick>
          <Quick $w={18}><Doc /></Quick><DropSlot $w={11}><Drop /></DropSlot>
          <Quick $w={17}><OpenDoc /></Quick><DropSlot $w={11}><Drop /></DropSlot>
          <Quick $w={17}><Floppy /></Quick><DropSlot $w={11}><Drop /></DropSlot>
          <Quick $w={17}><Printer /></Quick><DropSlot $w={10}><Drop /></DropSlot>
          <Quick $w={17}><Undo /></Quick><DropSlot $w={11}><Drop /></DropSlot>
          <SelectBox><Cursor /><Drop /></SelectBox>
          <Quick $w={17}><Lights /></Quick>
          <Quick $w={17} $s={12}><ListPane /></Quick>
          <Quick $w={20}><Gear /></Quick><DropSlot $w={6}><Drop /></DropSlot>
          <DocName>TRE...</DocName>
          <Search>
            <Prompt />
            <span>Search Commands</span>
            <Lens />
            <Drop $c="#333" />
          </Search>
          <Quick $w={24}><User /></Quick>
          <Quick $w={13}><Help>?</Help></Quick><DropSlot $w={14}><Drop /></DropSlot>
          <Quick $w={14}><WinMin c={WIN} /></Quick>
          <Quick $w={19}><WinMax c={WIN} /></Quick>
          <Quick $w={19}><WinClose c={WIN} /></Quick>
        </QuickBar>
      </TitleBar>

      <RibbonBar>
        <BigTool w={38} label={["Sketch"]} icon={<SketchIcon />} drop />
        <BigTool w={43} label={["Smart", "Dimension"]} icon={<SmartIcon />} drop />
        <Sep />
        <SmallGrid>
          <SmallTool><Line /><Drop /></SmallTool>
          <SmallTool><Ring /><Drop /></SmallTool>
          <SmallTool><Spline /><Drop /></SmallTool>
          <SmallTool><PlaneGrid /></SmallTool>
          <SmallTool><Rect /><Drop /></SmallTool>
          <SmallTool><ArcTool /><Drop /></SmallTool>
          <SmallTool><Ellipse /><Drop /></SmallTool>
          <SmallTool><TextA /></SmallTool>
          <SmallTool><Slot /><Drop /></SmallTool>
          <SmallTool><Hex /></SmallTool>
          <SmallTool><Fillet /><Drop $c="#777" /></SmallTool>
          <SmallTool><Dot /></SmallTool>
        </SmallGrid>
        <Sep />
        <BigTool w={33} label={["Trim", "Entities"]} icon={<TrimIcon />} off drop />
        <BigTool w={36} label={["Convert", "Entities"]} icon={<ConvertIcon />} drop />
        <BigTool w={33} label={["Offset", "Entities"]} icon={<OffsetIcon />} off top={8} />
        <ListTools>
          <ListTool><MirrorIcon /><span>Mirror Entities</span></ListTool>
          <ListTool><PatternIcon /><span>Linear Sketch Pattern</span><Drop $c="#777" /></ListTool>
          <ListTool><MoveIcon /><span>Move Entities</span><Drop $c="#777" /></ListTool>
        </ListTools>
        <Sep />
        <BigTool w={56} label={["Display/Delete", "Relations"]} icon={<RelationIcon />} off drop />
        <BigTool w={34} label={["Repair", "Sketch"]} icon={<RepairIcon />} off top={8} />
        <Sep />
        <BigTool w={30} label={["Quick", "Snaps"]} icon={<SnapsIcon />} off drop />
        <Sep />
        <BigTool w={33} label={["Rapid", "Sketch"]} icon={<RapidIcon />} strong top={8} />
      </RibbonBar>

      <Workspace>
        <TabStrip>
          {RIBBON_TABS.map(([t, w]) => <RibbonTab key={t} $w={w} $on={t === "Sketch"}>{t}</RibbonTab>)}
        </TabStrip>

        <LeftPanel>
          <Grip />
          <PaneTabs>
            <PaneTab $on><Part s={15} /></PaneTab>
            <PaneTab><ListPane s={12} /></PaneTab>
            <PaneTab>
              <Svg s={13}><path d="M3 1v14M3 4h6M3 11h6" stroke="#ddd" /><path d="M9 2h5v4H9zM9 9h5v4H9z" fill="#ddd" /></Svg>
            </PaneTab>
            <PaneTab>
              <Svg s={15}><circle cx="8" cy="8" r="5" stroke="#bbb" /><path d="M8 0v16M0 8h16" stroke="#bbb" /></Svg>
            </PaneTab>
            <PaneTab><Wheel s={14} /></PaneTab>
            <Chevron>»</Chevron>
          </PaneTabs>
          <FilterRow>
            <Svg s={12}><path d="M1 2h14L10 8v6l-4 2V8z" fill="#d8e4ea" stroke="#8fb6cc" /></Svg>
          </FilterRow>
          <TreeArea>
            <Tree>
              <RootRow><Part /><span>TREO2 &nbsp;(Default&lt;&lt;Default&gt;_Display</span></RootRow>
              {TREE.map((row) => (
                <Row key={row.label}>
                  <Caret $show={row.arrow} />
                  <RowIcon>{row.icon}</RowIcon>
                  <span>{row.label}</span>
                </Row>
              ))}
            </Tree>
            <VScroll>
              <ScrollEnd><ScrollMark d="M2 11l6-6 6 6" /></ScrollEnd>
              <VThumb />
              <VSpace />
              <ScrollEnd><ScrollMark d="M2 5l6 6 6-6" /></ScrollEnd>
            </VScroll>
          </TreeArea>
          <HScroll>
            <HArrow><ScrollMark d="M11 2L5 8l6 6" /></HArrow>
            <HThumb />
            <HArrow><ScrollMark d="M5 2l6 6-6 6" /></HArrow>
          </HScroll>
          <PanelFoot />
        </LeftPanel>
        <Splitter />

        <Viewport>
          <HudBar>
            <Hud><HudZoom /></Hud>
            <Hud><HudArea /></Hud>
            <Hud><HudPrev /></Hud>
            <Hud><HudSection /></Hud>
            <Hud><HudDyn /></Hud>
            <Hud><HudOrient /></Hud>
            <Hud $w={11}><Drop $c="#888" /></Hud>
            <Hud $w={17}><HudStyle /></Hud>
            <Hud $w={11}><Drop $c="#888" /></Hud>
            <Hud $on $w={18}><Eye /></Hud>
            <Hud $on $w={8}><Drop $c="#444" /></Hud>
            <Hud $w={18}><Wheel /></Hud>
            <Hud $w={18}><Scene /></Hud>
            <Hud $w={9}><Drop $c="#888" /></Hud>
            <Hud $w={20}><Monitor /></Hud>
            <Hud $w={7}><Drop $c="#888" /></Hud>
          </HudBar>
          <DocControls>
            <PaneArrow />
            <PaneArrow flip />
            <WinMin c="#9a9a90" />
            <WinMax c="#9a9a90" />
            <WinClose c="#9a9a90" />
          </DocControls>
          <TaskPane>
            <TaskBtn><House /></TaskBtn>
            <TaskBtn><Svg><path d="M3 5l4-3 6 2v9l-4 2-6-2z" fill="#999" /><path d="M7 3v11M10 3v11" stroke="#333" /></Svg></TaskBtn>
            <TaskBtn><Svg><path d="M1 3h5l1 2h7l-2 9H1z" fill="#e0e0e0" /></Svg></TaskBtn>
            <TaskBtn><Svg><rect x="1" y="2" width="14" height="12" fill="#8a6d2b" /><path d="M3 12l5-7 5 7z" fill="#e8c34a" /></Svg></TaskBtn>
            <TaskBtn $on><Wheel /></TaskBtn>
            <TaskBtn><ListPane /></TaskBtn>
            <TaskBtn><Svg><rect x="1" y="2" width="10" height="8" fill="#5aa6d6" /><rect x="6" y="7" width="9" height="7" fill="#eee" /></Svg></TaskBtn>
          </TaskPane>
          <KnucklePart />
          <Triad viewBox="0 0 34 44">
            <path d="M28 24L23 7" stroke="#a01c1c" strokeWidth="3" />
            <path d="M28 24L26 40" stroke="#1d6e2a" strokeWidth="3" />
            <path d="M28 24H10" stroke="#2222e0" strokeWidth="2.4" />
            <path d="M12 21l-6 3 6 3z" fill="#2222e0" />
            <text x="20" y="7" fontSize="7" fill="#b02020" fontFamily="Liberation Sans">X</text>
            <text x="1" y="28" fontSize="7" fill="#2222e0" fontFamily="Liberation Sans">Z</text>
          </Triad>
        </Viewport>
      </Workspace>

      <ModelTabs>
        <NavArrows>
          {["|‹", "‹", "›", "›|"].map((a) => <NavArrow key={a}>{a}</NavArrow>)}
        </NavArrows>
        <ModelTab $on>Model</ModelTab>
        <ModelTab>3D Views</ModelTab>
        <ModelTab>Motion Study 1</ModelTab>
      </ModelTabs>

      <StatusBar>
        <StatusText>SOLIDWORKS Premium 2019 SP0.0</StatusText>
        <StatusCell $w={6} />
        <StatusCell $w={49}>Editing Part</StatusCell>
        <StatusCell $w={12} />
        <StatusCell $w={125} $justify="flex-start" $pad={22}>
          <span>MMGS</span><Drop /><Spacer />
          <Svg s={10}><path d="M1 4l4-3 6 4 4-2v7l-6 4-8-5z" fill="#c9c9c9" /></Svg>
        </StatusCell>
      </StatusBar>
    </Page>
  );
}
